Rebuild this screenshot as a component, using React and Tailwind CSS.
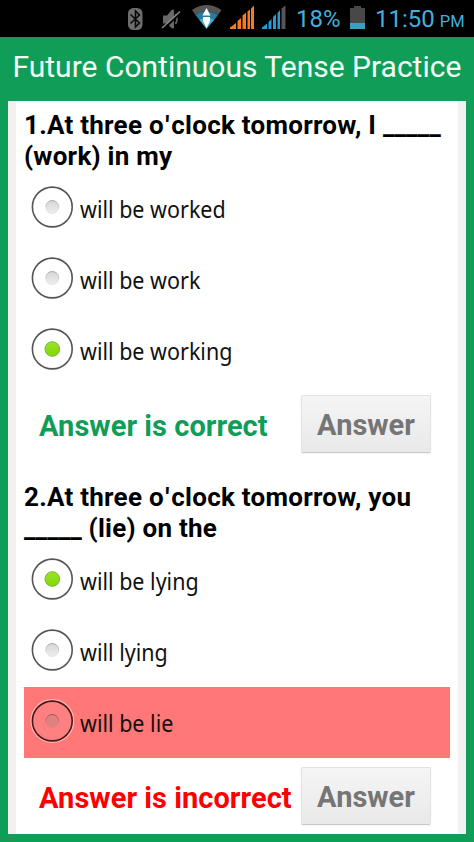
import React, { useState } from 'react'
import clsx from 'clsx'

const questions = [
  {
    text: ["1.At three o'clock tomorrow, I _____", '(work) in my'],
    options: ['will be worked', 'will be work', 'will be working'],
    selected: 2,
    wrong: null,
    result: 'Answer is correct'
  },
  {
    text: ["2.At three o'clock tomorrow, you", '_____ (lie) on the'],
    options: ['will be lying', 'will lying', 'will be lie'],
    selected: 0,
    wrong: 2,
    result: 'Answer is incorrect'
  }
]

const StatusBar = () => {
  return (
    <div className='flex h-[37px] shrink-0 items-start bg-black pl-[125px] text-[#42b0dc]'>
      <svg className='h-[37px] w-[168px] shrink-0' viewBox='125 0 168 37'>
        <rect x='128' y='8' width='14.500' height='22' rx='5.500' fill='#6e6e6e' />
        <path d='M130.500 14.500l9 8.500-4 4V11l4 4-9 8.500' fill='none' stroke='#0a0a0a' strokeWidth='1.600' />
        <path d='M163 15.500h4l5-6 2 .5v18l-2 .5-5-5h-4z' fill='#686868' />
        <path d='M175.500 14q3 5 0 10' fill='none' stroke='#686868' strokeWidth='1.600' />
        <path d='M163 29.500L180.500 13' stroke='#000' strokeWidth='2' />
        <path d='M162 28L180 11.500' stroke='#8a8a8a' strokeWidth='1.500' />
        <path d='M192 10q14.500-10 29.500 0l-3.500 5q-11-7.500-22.500 0z' fill='#555' />
        <path d='M195.500 15q11-7.500 22.500 0l-3.500 4.500q-7.500-5-15.500 0z' fill='#287b9d' />
        <path d='M199 19.500q8-5 15.500 0L206.500 29z' fill='#45a8cf' />
        <path d='M206.500 8l4 7.500h-8zM203 17h7v4l-3.500 7-3.500-7z' fill='#fff' />
        <path d='M230 29v-1.500l6-4.500V29zM237.500 29v-8l3.500-3v11zM242.500 29V15.500l3.500-3V29zM247.500 29V11.500l2.500-2V29zM251 29V8.500l3-3V29z' fill='#f57b20' />
        <path d='M262 29v-1.500l5-4V29zM268.500 29v-7l3-3v10zM273 29V17l3-3v15zM277.500 29V13l2.500-3v19z' fill='#239bd8' />
        <path d='M281.500 29V8.500l4-3V29z' fill='#555' />
      </svg>
      <span className='mt-[3px] w-[56px] pl-[3px] text-[24px] leading-[32px] whitespace-nowrap'>18%</span>
      <svg className='h-[37px] w-[17px] shrink-0' viewBox='348 0 17 37'>
        <path d='M353 6h7v2h4v21h-15V8h4z' fill='#484848' />
        <path d='M349 23h15v6h-15z' fill='#3f9cc2' />
      </svg>
      <span className='mt-[3px] ml-[9px] text-[24px] leading-[32px] whitespace-nowrap'>11:50</span>
      <span className='mt-[6px] ml-[5px] text-[16.5px] leading-[32px] whitespace-nowrap'>PM</span>
    </div>
  )
}

const Radio = ({ checked, wrong }) => {
  return (
    <svg className='h-[44px] w-[44px] shrink-0' viewBox='0 0 44 44'>
      <defs>
        <linearGradient id='dotOn' x2='0' y2='1'>
          <stop stopColor='#9ce32b' />
          <stop offset='1' stopColor='#80d800' />
        </linearGradient>
        <linearGradient id='dotOff' x2='0' y2='1'>
          <stop stopColor='#d6d6d6' />
          <stop offset='1' stopColor='#eeeeee' />
        </linearGradient>
        <linearGradient id='rimOff' x2='0' y2='1'>
          <stop stopColor='#a6a6a6' />
          <stop offset='0.7' stopColor='#e2e2e2' />
        </linearGradient>
        <linearGradient id='rimWrong' x2='0' y2='1'>
          <stop stopColor='#a04c4c' />
          <stop offset='0.7' stopColor='#e88080' />
        </linearGradient>
      </defs>
      {wrong && <circle cx='22.3' cy='22' r='21.2' fill='none' stroke='#ffb5b5' strokeWidth='1.600' />}
      <circle cx='22.3' cy='22' r='19.9' fill={wrong ? '#ff8080' : '#fff'} stroke={wrong ? '#4a1818' : '#555'} strokeWidth='1.600' />
      {checked && <circle cx='22.3' cy='22' r='7.300' fill='url(#dotOn)' stroke='#79b535' />}
      {!checked && <circle cx='22.3' cy='22' r='6.500' fill={wrong ? '#e08080' : 'url(#dotOff)'} stroke={wrong ? 'url(#rimWrong)' : 'url(#rimOff)'} />}
    </svg>
  )
}

// blanks and apostrophes need their own spacing
const QuestionLine = ({ line }) => {
  return (
    <p>
      {line.split(/('|_+)/).map((part, idx) => {
        if (part === "'") return <span key={idx} className='mx-[1.5px]'>{part}</span>
        if (part.startsWith('_')) return <span key={idx} className='tracking-normal'>{part}</span>
        return part
      })}
    </p>
  )
}

const Question = ({ question }) => {
  const [selected, setSelected] = useState(question.selected)

  return (
    <div className='flex h-[372px] shrink-0 flex-col'>
      <div className='h-[71px] pt-[8px] text-[26px] leading-[31px] font-bold tracking-[0.25px] whitespace-nowrap text-black'>
        {question.text.map((line) => <QuestionLine key={line} line={line} />)}
      </div>
      {question.options.map((option, idx) => {
        const wrong = question.wrong === idx
        return (
          <div key={option} onClick={() => setSelected(idx)} className={clsx('flex h-[71px] items-start pt-[12px] pl-[6px]', wrong && 'bg-[#ff7777]')}>
            <Radio checked={selected === idx} wrong={wrong} />
            <span className='mt-[7px] ml-[6px] origin-left scale-x-[0.935] font-["Noto_Sans"] text-[23px] leading-[34px] whitespace-nowrap text-[#111]'>{option}</span>
          </div>
        )
      })}
      <div className='flex items-start justify-between pt-[9px] pr-[19px] pl-[15px]'>
        <p className={clsx('mt-[13px] text-[29px] leading-[36px] font-bold tracking-[0.05px] whitespace-nowrap', question.wrong === null ? 'text-[#109d58]' : 'text-[#ff0000]')}>{question.result}</p>
        <button className='h-[58px] w-[130px] shrink-0 rounded-[2px] border border-[#e2e2e2] border-b-[#c8c8c8] bg-linear-to-b from-[#f5f5f5] to-[#e9e9e9] pt-[4px] text-[29px] font-bold text-[#757575] shadow-xs'>Answer</button>
      </div>
    </div>
  )
}

const App = () => {
  return (
    <div className='flex h-[842px] w-[474px] flex-col overflow-hidden bg-[#109d58] font-[Roboto,sans-serif]'>
      <StatusBar />
      <h1 className='h-[64px] shrink-0 pt-[10px] pl-[12.5px] text-[30px] leading-[40px] whitespace-nowrap text-[#f2fff5]'>Future Continuous Tense Practice</h1>
      <div className='mx-[8px] mb-[8px] flex-1 overflow-hidden border-x-[8px] border-[#f2f0f1] bg-white px-[8px] pt-px'>
        {questions.map((question) => <Question key={question.result} question={question} />)}
      </div>
    </div>
  )
}

export default App
